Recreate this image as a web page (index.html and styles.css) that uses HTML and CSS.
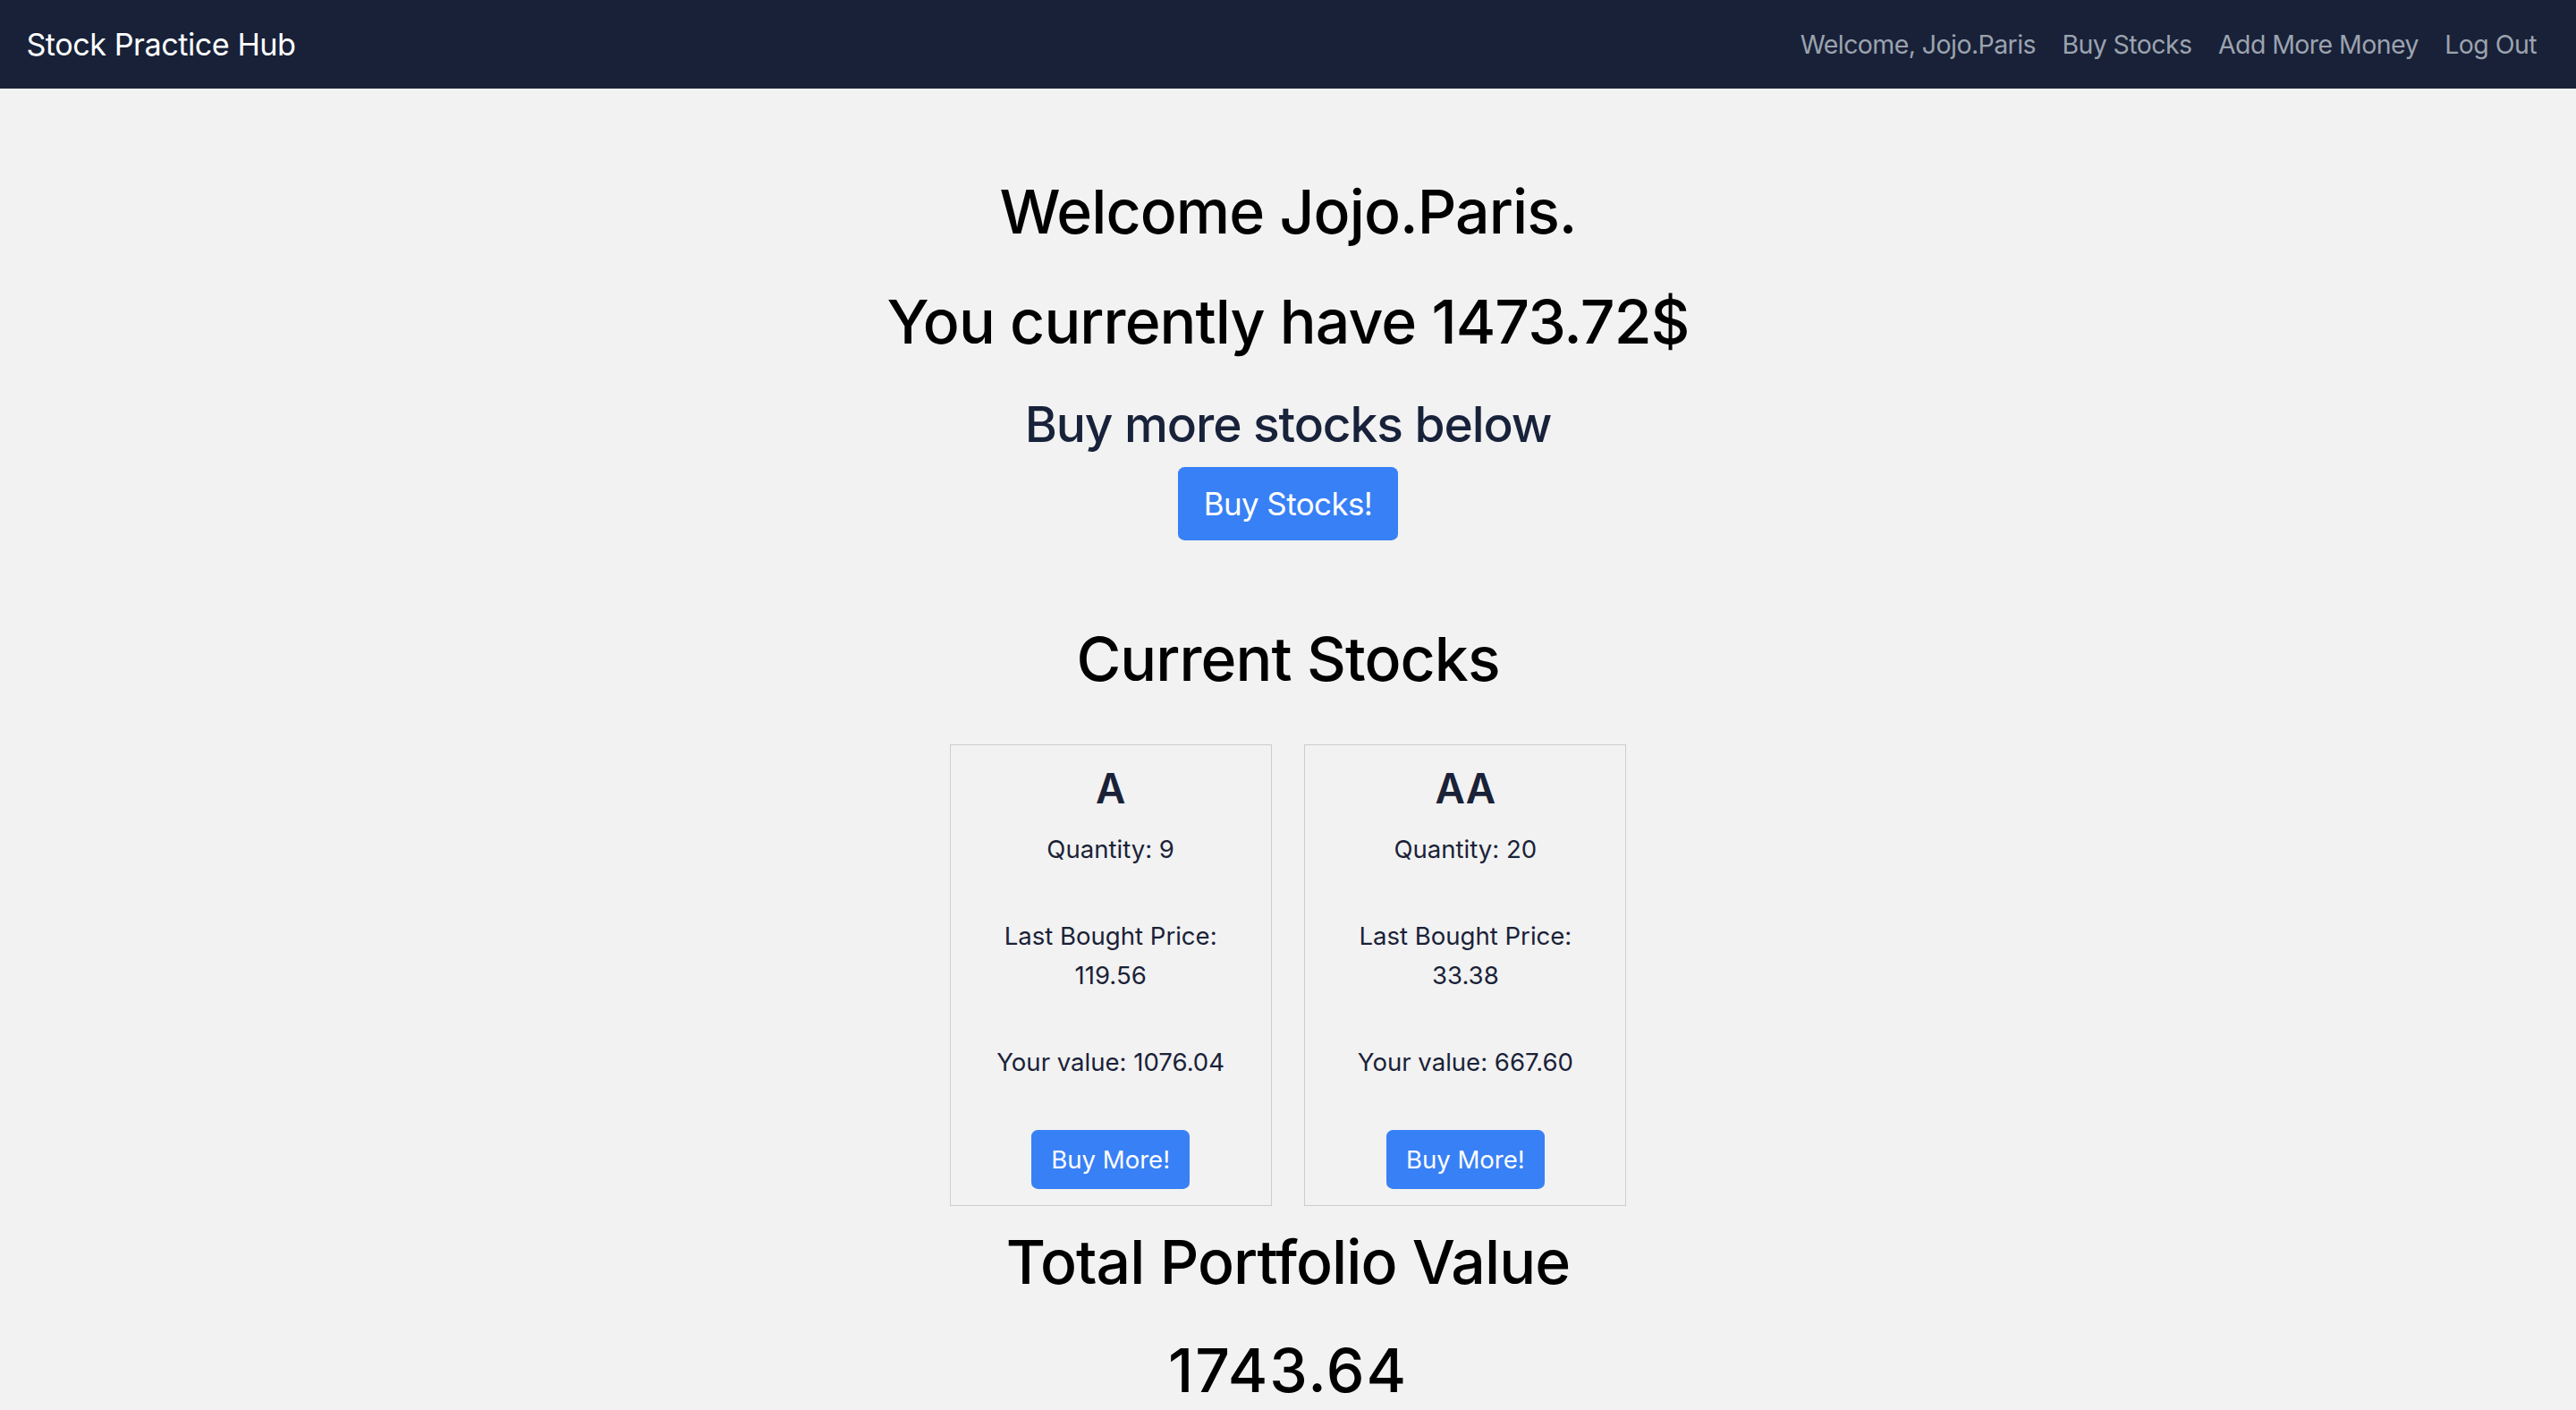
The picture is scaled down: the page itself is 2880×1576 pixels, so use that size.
FILE: index.html
```html
<!DOCTYPE html>
<html lang="en">
<head>
  <meta charset="UTF-8">
  <meta name="viewport" content="width=device-width, initial-scale=1.0">
  <title>Stock Practice Hub</title>
  <link rel="stylesheet" href="styles.css">
</head>
<body>
<nav class="navbar">
  <a class="brand" href="#">Stock Practice Hub</a>
  <div class="nav-links">
    <a href="#">Welcome, Jojo.Paris</a>
    <a href="#">Buy Stocks</a>
    <a href="#">Add More Money</a>
    <a href="#">Log Out</a>
  </div>
</nav>

<main class="dashboard">
  <h1 class="title">Welcome Jojo.Paris.</h1>
  <h1 class="title balance">You currently have 1473.72$</h1>
  <h2 class="subtitle">Buy more stocks below</h2>
  <a class="btn btn-big" href="#">Buy Stocks!</a>

  <h1 class="title section-title">Current Stocks</h1>

  <div class="stock-list">
    <div class="stock-card">
      <h3 class="symbol">A</h3>
      <p>Quantity: 9</p>
      <p>Last Bought Price: 119.56</p>
      <p>Your value: 1076.04</p>
      <a class="btn btn-small" href="#">Buy More!</a>
    </div>
    <div class="stock-card">
      <h3 class="symbol">AA</h3>
      <p>Quantity: 20</p>
      <p>Last Bought Price: 33.38</p>
      <p>Your value: 667.60</p>
      <a class="btn btn-small" href="#">Buy More!</a>
    </div>
  </div>

  <h1 class="title total-title">Total Portfolio Value</h1>
  <h1 class="title total-value">1743.64</h1>
</main>
</body>
</html>
```

FILE: styles.css
```css
html {
  /* screenshot was taken on a hi-dpi display */
  zoom: 1.8367;
}

body {
  margin: 0;
  font-family: Inter, "Noto Sans", sans-serif;
  background-color: #f2f2f2;
  color: #000;
}

a {
  text-decoration: none;
}

.navbar {
  display: flex;
  align-items: center;
  justify-content: space-between;
  height: 54px;
  padding: 0 24px 0 16px;
  background-color: #182138;
}

.brand {
  color: #fff;
  font-size: 18.6px;
  letter-spacing: -0.25px;
}

.nav-links {
  display: flex;
  gap: 16px;
}

.nav-links a {
  color: #9ca3af;
  font-size: 15.5px;
  letter-spacing: -0.3px;
}

.dashboard {
  display: flex;
  flex-direction: column;
  align-items: center;
  padding-top: 55px;
}

.title {
  margin: 0;
  font-size: 37px;
  line-height: 40px;
  font-weight: 500;
  letter-spacing: -0.5px;
}

.balance {
  margin-top: 27px;
}

.subtitle {
  margin: 24px 0 0;
  font-size: 30px;
  line-height: 36px;
  font-weight: 500;
  letter-spacing: -0.6px;
  color: #18223a;
}

.btn {
  display: inline-flex;
  align-items: center;
  justify-content: center;
  background-color: #3880f5;
  color: #fff;
  border-radius: 4px;
}

.btn-big {
  margin-top: 8px;
  width: 134px;
  height: 45px;
  font-size: 19px;
  letter-spacing: -0.3px;
}

.section-title {
  margin-top: 52px;
}

.stock-list {
  display: flex;
  gap: 20px;
  margin-top: 32px;
}

.stock-card {
  display: flex;
  flex-direction: column;
  align-items: center;
  width: 196px;
  box-sizing: border-box;
  padding: 11px 16px 10px;
  border: 1px solid #cdcdcd;
  text-align: center;
  color: #1a2238;
}

.symbol {
  margin: 0 0 8px;
  font-size: 25px;
  line-height: 32px;
  font-weight: 600;
}

.stock-card p {
  margin: 0 0 29px;
  font-size: 15px;
  line-height: 24px;
}

.btn-small {
  width: 96px;
  height: 36px;
  font-size: 15px;
  border-radius: 4px;
}

.total-title {
  margin-top: 14px;
}

.total-value {
  margin-top: 26px;
  letter-spacing: 1px;
}
```
